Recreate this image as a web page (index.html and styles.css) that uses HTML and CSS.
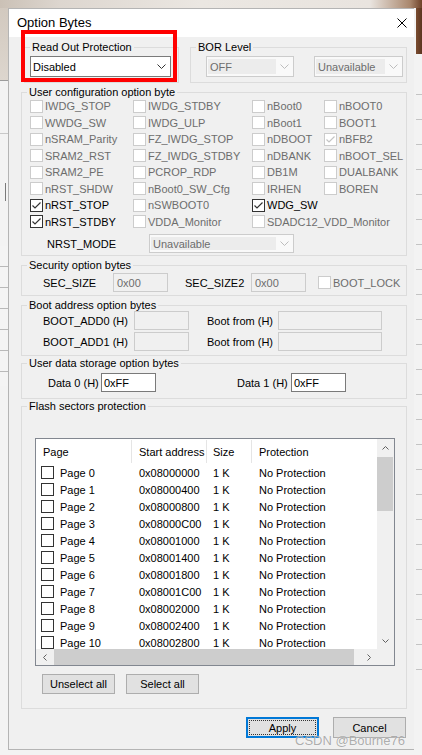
FILE: index.html
```html
<!DOCTYPE html>
<html lang="en">
<head>
<meta charset="utf-8">
<title>Option Bytes</title>
<link rel="stylesheet" href="styles.css">
</head>
<body>
<div class="dialog">
  <div class="titlebar">
    <span class="title">Option Bytes</span>
    <svg class="close" width="10" height="10" viewBox="0 0 10 10"><path d="M0.5 0.5L9.5 9.5M9.5 0.5L0.5 9.5" stroke="#000" stroke-width="1" fill="none"/></svg>
  </div>
  <div class="content">
    <div class="toprow">
      <div class="group rop">
        <div class="gtitle">Read Out Protection</div>
        <div class="combo rop-combo"><span class="val">Disabled</span><span class="arrow"><svg width="9" height="5" viewBox="0 0 9 5"><path d="M0.5 0.5L4.5 4.5L8.5 0.5" fill="none" stroke="currentColor"/></svg></span></div>
      </div>
      <div class="group bor">
        <div class="gtitle">BOR Level</div>
        <div class="bor-row">
          <div class="combo dis w-off"><span class="val">OFF</span><span class="arrow"><svg width="9" height="5" viewBox="0 0 9 5"><path d="M0.5 0.5L4.5 4.5L8.5 0.5" fill="none" stroke="currentColor"/></svg></span></div>
          <div class="combo dis w-unav"><span class="val">Unavailable</span><span class="arrow"><svg width="9" height="5" viewBox="0 0 9 5"><path d="M0.5 0.5L4.5 4.5L8.5 0.5" fill="none" stroke="currentColor"/></svg></span></div>
        </div>
      </div>
    </div>

    <div class="group ucfg">
      <div class="gtitle">User configuration option byte</div>
      <div class="cbgrid">
        <div class="cb"><span class="box"></span>IWDG_STOP</div>
        <div class="cb"><span class="box"></span>IWDG_STDBY</div>
        <div class="cb"><span class="box"></span>nBoot0</div>
        <div class="cb"><span class="box"></span>nBOOT0</div>

        <div class="cb"><span class="box"></span>WWDG_SW</div>
        <div class="cb"><span class="box"></span>IWDG_ULP</div>
        <div class="cb"><span class="box"></span>nBoot1</div>
        <div class="cb"><span class="box"></span>BOOT1</div>

        <div class="cb"><span class="box"></span>nSRAM_Parity</div>
        <div class="cb"><span class="box"></span>FZ_IWDG_STOP</div>
        <div class="cb"><span class="box"></span>nDBOOT</div>
        <div class="cb"><span class="box"><svg width="11" height="11" viewBox="0 0 11 11"><path d="M1.5 5.5L4 8L9.5 2.5" fill="none" stroke="currentColor" stroke-width="1.2"/></svg></span>nBFB2</div>

        <div class="cb"><span class="box"></span>SRAM2_RST</div>
        <div class="cb"><span class="box"></span>FZ_IWDG_STDBY</div>
        <div class="cb"><span class="box"></span>nDBANK</div>
        <div class="cb"><span class="box"></span>nBOOT_SEL</div>

        <div class="cb"><span class="box"></span>SRAM2_PE</div>
        <div class="cb"><span class="box"></span>PCROP_RDP</div>
        <div class="cb"><span class="box"></span>DB1M</div>
        <div class="cb"><span class="box"></span>DUALBANK</div>

        <div class="cb"><span class="box"></span>nRST_SHDW</div>
        <div class="cb"><span class="box"></span>nBoot0_SW_Cfg</div>
        <div class="cb"><span class="box"></span>IRHEN</div>
        <div class="cb"><span class="box"></span>BOREN</div>

        <div class="cb on"><span class="box"><svg width="11" height="11" viewBox="0 0 11 11"><path d="M1.5 5.5L4 8L9.5 2.5" fill="none" stroke="currentColor" stroke-width="1.2"/></svg></span>nRST_STOP</div>
        <div class="cb"><span class="box"></span>nSWBOOT0</div>
        <div class="cb on"><span class="box"><svg width="11" height="11" viewBox="0 0 11 11"><path d="M1.5 5.5L4 8L9.5 2.5" fill="none" stroke="currentColor" stroke-width="1.2"/></svg></span>WDG_SW</div>
        <div></div>

        <div class="cb on"><span class="box"><svg width="11" height="11" viewBox="0 0 11 11"><path d="M1.5 5.5L4 8L9.5 2.5" fill="none" stroke="currentColor" stroke-width="1.2"/></svg></span>nRST_STDBY</div>
        <div class="cb"><span class="box"></span>VDDA_Monitor</div>
        <div class="cb span2"><span class="box"></span>SDADC12_VDD_Monitor</div>
      </div>
      <div class="nrst">
        <span class="nrst-label">NRST_MODE</span>
        <div class="combo dis w-nrst"><span class="val">Unavailable</span><span class="arrow"><svg width="9" height="5" viewBox="0 0 9 5"><path d="M0.5 0.5L4.5 4.5L8.5 0.5" fill="none" stroke="currentColor"/></svg></span></div>
      </div>
    </div>

    <div class="group sec">
      <div class="gtitle">Security option bytes</div>
      <div class="frow sec-row">
        <span class="l-sec">SEC_SIZE</span>
        <div class="edit w55">0x00</div>
        <span class="l-sec2">SEC_SIZE2</span>
        <div class="edit w55">0x00</div>
        <div class="cb bootlock"><span class="box"></span>BOOT_LOCK</div>
      </div>
    </div>

    <div class="group boot">
      <div class="gtitle">Boot address option bytes</div>
      <div class="frow boot-row first">
        <span class="l-badd">BOOT_ADD0 (H)</span>
        <div class="edit w55"></div>
        <span class="l-bfrom">Boot from (H)</span>
        <div class="edit w104"></div>
      </div>
      <div class="frow boot-row">
        <span class="l-badd">BOOT_ADD1 (H)</span>
        <div class="edit w55"></div>
        <span class="l-bfrom">Boot from (H)</span>
        <div class="edit w104"></div>
      </div>
    </div>

    <div class="group udata">
      <div class="gtitle">User data storage option bytes</div>
      <div class="frow udata-row">
        <span class="l-d0">Data 0 (H)</span>
        <div class="edit en w55">0xFF</div>
        <span class="l-d1">Data 1 (H)</span>
        <div class="edit en w55">0xFF</div>
      </div>
    </div>

    <div class="group flash">
      <div class="gtitle">Flash sectors protection</div>
      <div class="list">
        <div class="lmain">
          <div class="lhead">
            <div>Page</div>
            <div>Start address</div>
            <div class="c-size">Size</div>
            <div class="c-last">Protection</div>
          </div>
          <div class="lrow"><div class="c-page"><span class="rbox"></span>Page 0</div><div>0x08000000</div><div class="c-size">1 K</div><div>No Protection</div></div>
          <div class="lrow"><div class="c-page"><span class="rbox"></span>Page 1</div><div>0x08000400</div><div class="c-size">1 K</div><div>No Protection</div></div>
          <div class="lrow"><div class="c-page"><span class="rbox"></span>Page 2</div><div>0x08000800</div><div class="c-size">1 K</div><div>No Protection</div></div>
          <div class="lrow"><div class="c-page"><span class="rbox"></span>Page 3</div><div>0x08000C00</div><div class="c-size">1 K</div><div>No Protection</div></div>
          <div class="lrow"><div class="c-page"><span class="rbox"></span>Page 4</div><div>0x08001000</div><div class="c-size">1 K</div><div>No Protection</div></div>
          <div class="lrow"><div class="c-page"><span class="rbox"></span>Page 5</div><div>0x08001400</div><div class="c-size">1 K</div><div>No Protection</div></div>
          <div class="lrow"><div class="c-page"><span class="rbox"></span>Page 6</div><div>0x08001800</div><div class="c-size">1 K</div><div>No Protection</div></div>
          <div class="lrow"><div class="c-page"><span class="rbox"></span>Page 7</div><div>0x08001C00</div><div class="c-size">1 K</div><div>No Protection</div></div>
          <div class="lrow"><div class="c-page"><span class="rbox"></span>Page 8</div><div>0x08002000</div><div class="c-size">1 K</div><div>No Protection</div></div>
          <div class="lrow"><div class="c-page"><span class="rbox"></span>Page 9</div><div>0x08002400</div><div class="c-size">1 K</div><div>No Protection</div></div>
          <div class="lrow"><div class="c-page"><span class="rbox"></span>Page 10</div><div>0x08002800</div><div class="c-size">1 K</div><div>No Protection</div></div>
        </div>
        <div class="vscroll">
          <div class="sb-btn v"><svg width="7" height="4" viewBox="0 0 7 4"><path d="M0.5 3.5L3.5 0.5L6.5 3.5" fill="none" stroke="currentColor"/></svg></div>
          <div class="vtrack"><div class="vthumb"></div></div>
          <div class="sb-btn v"><svg width="7" height="4" viewBox="0 0 7 4"><path d="M0.5 0.5L3.5 3.5L6.5 0.5" fill="none" stroke="currentColor"/></svg></div>
        </div>
        <div class="hscroll">
          <div class="sb-btn h"><svg width="4" height="7" viewBox="0 0 4 7"><path d="M3.5 0.5L0.5 3.5L3.5 6.5" fill="none" stroke="currentColor"/></svg></div>
          <div class="htrack"><div class="hthumb"></div></div>
          <div class="sb-btn h"><svg width="4" height="7" viewBox="0 0 4 7"><path d="M0.5 0.5L3.5 3.5L0.5 6.5" fill="none" stroke="currentColor"/></svg></div>
        </div>
        <div class="corner"></div>
      </div>
      <div class="btnrow">
        <button class="btn">Unselect all</button>
        <button class="btn">Select all</button>
      </div>
    </div>

    <div class="actions">
      <button class="btn big default"><span class="focus">Apply</span></button>
      <button class="btn big">Cancel</button>
    </div>
  </div>
  <div class="annot"></div>
</div>
<div class="watermark">CSDN @Bourne76</div>
</body>
</html>
```

FILE: styles.css
```css
* { box-sizing: border-box; }

html { overflow: hidden; }

body {
  margin: 8px;
  font-family: "Liberation Sans", Arial, sans-serif;
  font-size: 11px;
  line-height: 14px;
  color: #000;
  background:
    linear-gradient(90deg, #cbc1b6 0px, #ddd6cf 60px, #ebe7e2 200px, #e9e4df 370px, #a9876d 410px, #6e4228 422px) 0 0 / 100% 8px no-repeat,
    linear-gradient(#d2c9bf, #ddd6ce) 0 8px / 8px 72px no-repeat,
    linear-gradient(#9c9c9c, #9c9c9c) 0 80px / 8px 1px no-repeat,
    linear-gradient(#c8c8c8, #c8c8c8) 0 133px / 8px 1px no-repeat,
    linear-gradient(#7a7a7a, #7a7a7a) 5px 183px / 1px 18px no-repeat,
    repeating-linear-gradient(#f4f4f4 0 20px, #b9b9b9 20px 21px) 0 246px / 8px 140px no-repeat,
    linear-gradient(90deg, #7a4c30, #5b3520) 416px 8px / 6px 46px no-repeat,
    repeating-linear-gradient(#f3f3f3 0 24px, #c4c4c4 24px 25px) 416px 70px / 6px 600px no-repeat,
    #f3f3f3;
}

.dialog {
  position: relative;
  width: 408px;
  height: 742px;
  background: #f0f0f0;
  border: 1px solid #b4b4b4;
  box-shadow: 0 3px 12px rgba(0, 0, 0, 0.28);
  display: flex;
  flex-direction: column;
}

.titlebar {
  height: 28px;
  flex: none;
  background: #fff;
  display: flex;
  align-items: center;
  padding: 0 8px;
}

.title {
  font-size: 13px;
  line-height: 16px;
  margin-top: -1px;
}

.close { margin-left: auto; display: block; }

.content {
  flex: 1;
  padding: 10px 8px 0 12px;
  display: flex;
  flex-direction: column;
}

/* group boxes */
.group { border: 1px solid #dcdcdc; }

.gtitle {
  margin: -8px 0 -1px 5px;
  padding: 0 2px;
  background: #f0f0f0;
  width: max-content;
  line-height: 14px;
  white-space: nowrap;
}

.toprow { display: flex; gap: 11px; padding-left: 3px; }
.rop { width: 155px; padding-bottom: 5px; }
.bor { flex: 1; padding-bottom: 5px; }

/* combo boxes */
.combo {
  display: flex;
  align-items: stretch;
  height: 21px;
  border: 1px solid #7a7a7a;
  background: #fff;
}
.combo .val {
  flex: 1;
  display: flex;
  align-items: center;
  padding-left: 2px;
  white-space: nowrap;
  overflow: hidden;
}
.combo .arrow {
  width: 17px;
  flex: none;
  display: flex;
  align-items: center;
  justify-content: center;
  color: #333;
}
.combo .arrow svg { display: block; }

.rop-combo { width: 141px; margin: 3px 0 0 5px; }

.combo.dis { border-color: #cccccc; background: #f9f9f9; color: #6d6d6d; }
.combo.dis .val { background: #ececec; margin: 2px 0 2px 1px; padding-left: 2px; }
.combo.dis .arrow { color: #bdbdbd; }

.bor-row { display: flex; gap: 20px; margin: 3px 0 0 15px; }
.w-off { width: 88px; }
.w-unav { width: 89px; }

/* user configuration */
.ucfg { margin-top: 9px; padding-bottom: 2px; }

.cbgrid {
  display: grid;
  grid-template-columns: 103px 119px 72px 1fr;
  grid-auto-rows: 16.5px;
  margin-left: 8px;
}

.cb {
  display: flex;
  align-items: center;
  gap: 2px;
  white-space: nowrap;
  color: #6d6d6d;
}
.cb.on { color: #000; }
.span2 { grid-column: span 2; }

.box {
  width: 13px;
  height: 13px;
  flex: none;
  border: 1px solid #cccccc;
  background: #fff;
  color: #c4c4c4;
  display: flex;
  align-items: center;
  justify-content: center;
}
.box svg { display: block; }
.cb.on .box { border-color: #333; color: #333; }

.nrst {
  display: flex;
  align-items: center;
  margin: 4px 0 0 25px;
  height: 19px;
}
.nrst-label { width: 102px; }
.w-nrst { width: 145px; height: 19px; }

/* form rows */
.frow { display: flex; align-items: center; height: 19px; white-space: nowrap; }

.edit {
  height: 19px;
  border: 1px solid #cccccc;
  background: #f0f0f0;
  color: #6d6d6d;
  padding-left: 3px;
  display: flex;
  align-items: center;
}
.edit.en { border-color: #7a7a7a; background: #fff; color: #000; padding-left: 2px; }
.w55 { width: 55px; }
.w104 { width: 104px; }

.sec { margin-top: 9px; padding-bottom: 3px; }
.sec-row { margin: 2px 0 0 21px; }
.l-sec { width: 70px; }
.l-sec2 { width: 66px; margin-left: 17px; }
.bootlock { margin-left: 12px; }

.boot { margin-top: 9px; padding-bottom: 4px; }
.boot-row { margin: 2px 0 0 21px; }
.boot-row.first { margin-top: 0; }
.l-badd { width: 91px; }
.l-bfrom { width: 71px; margin-left: 18px; }

.udata { margin-top: 7px; padding-bottom: 6px; }
.udata-row { margin: 4px 0 0 26px; }
.l-d0 { width: 53px; }
.l-d1 { width: 54px; margin-left: 81px; }

/* flash sectors */
.flash { margin-top: 7px; padding-bottom: 14px; }

.list {
  width: 360px;
  height: 228px;
  margin: 26px 0 0 13px;
  border: 1px solid #828790;
  background: #fff;
  display: grid;
  grid-template-columns: 341px 17px;
  grid-template-rows: 210px 16px;
}

.lmain { overflow: hidden; }

.lhead, .lrow {
  display: grid;
  grid-template-columns: 96px 75px 45px 1fr;
  align-items: center;
  white-space: nowrap;
}
.lhead { height: 25px; }
.lhead > div {
  height: 23px;
  display: flex;
  align-items: center;
  padding-left: 7px;
  border-right: 1px solid #e5e5e5;
}
.lhead > .c-size { padding-left: 6px; }
.lhead > .c-last { border-right: 0; }

.lrow { height: 17px; }
.lrow > div { padding-left: 7px; }
.lrow > .c-size { padding-left: 6px; }
.lrow > .c-page { display: flex; align-items: center; gap: 6px; padding-left: 5px; }

.rbox {
  width: 13px;
  height: 13px;
  border: 1px solid #333;
  background: #fff;
  flex: none;
}

.vscroll { display: flex; flex-direction: column; background: #f0f0f0; }
.hscroll { display: flex; background: #f0f0f0; }
.corner { background: #f0f0f0; }

.sb-btn {
  display: flex;
  align-items: center;
  justify-content: center;
  color: #606060;
  flex: none;
}
.sb-btn svg { display: block; }
.sb-btn.v { height: 17px; }
.sb-btn.h { width: 17px; }

.vtrack { flex: 1; }
.vthumb { height: 54px; margin: 1px 1px 0 0; background: #cdcdcd; }
.htrack { flex: 1; }
.hthumb { width: 300px; height: 100%; margin-left: 1px; background: #cdcdcd; }

/* buttons */
.btn {
  font: inherit;
  color: #000;
  width: 73px;
  height: 20px;
  margin: 0;
  padding: 0;
  border: 1px solid #adadad;
  background: #e1e1e1;
  display: flex;
  align-items: center;
  justify-content: center;
}
.btn.big { height: 21px; }
.btn.default { border: 2px solid #0078d7; padding: 1px; }
.btn .focus {
  flex: 1;
  align-self: stretch;
  border: 1px dotted #333;
  display: flex;
  align-items: center;
  justify-content: center;
}

.btnrow { display: flex; gap: 11px; margin: 8px 0 0 20px; }

.actions {
  display: flex;
  justify-content: flex-end;
  gap: 14px;
  margin-top: 8px;
  padding-right: 1px;
}

/* annotation overlays */
.annot {
  position: absolute;
  left: 12px;
  top: 21px;
  width: 156px;
  height: 52px;
  border: 4px solid #ff0000;
}

.watermark {
  position: absolute;
  left: 295px;
  top: 733px;
  font-family: "Liberation Sans", Arial, sans-serif;
  font-size: 13px;
  line-height: 16px;
  color: rgba(105, 105, 105, 0.55);
  text-shadow: 0 0 1px rgba(255, 255, 255, 0.9);
  white-space: nowrap;
}
```
